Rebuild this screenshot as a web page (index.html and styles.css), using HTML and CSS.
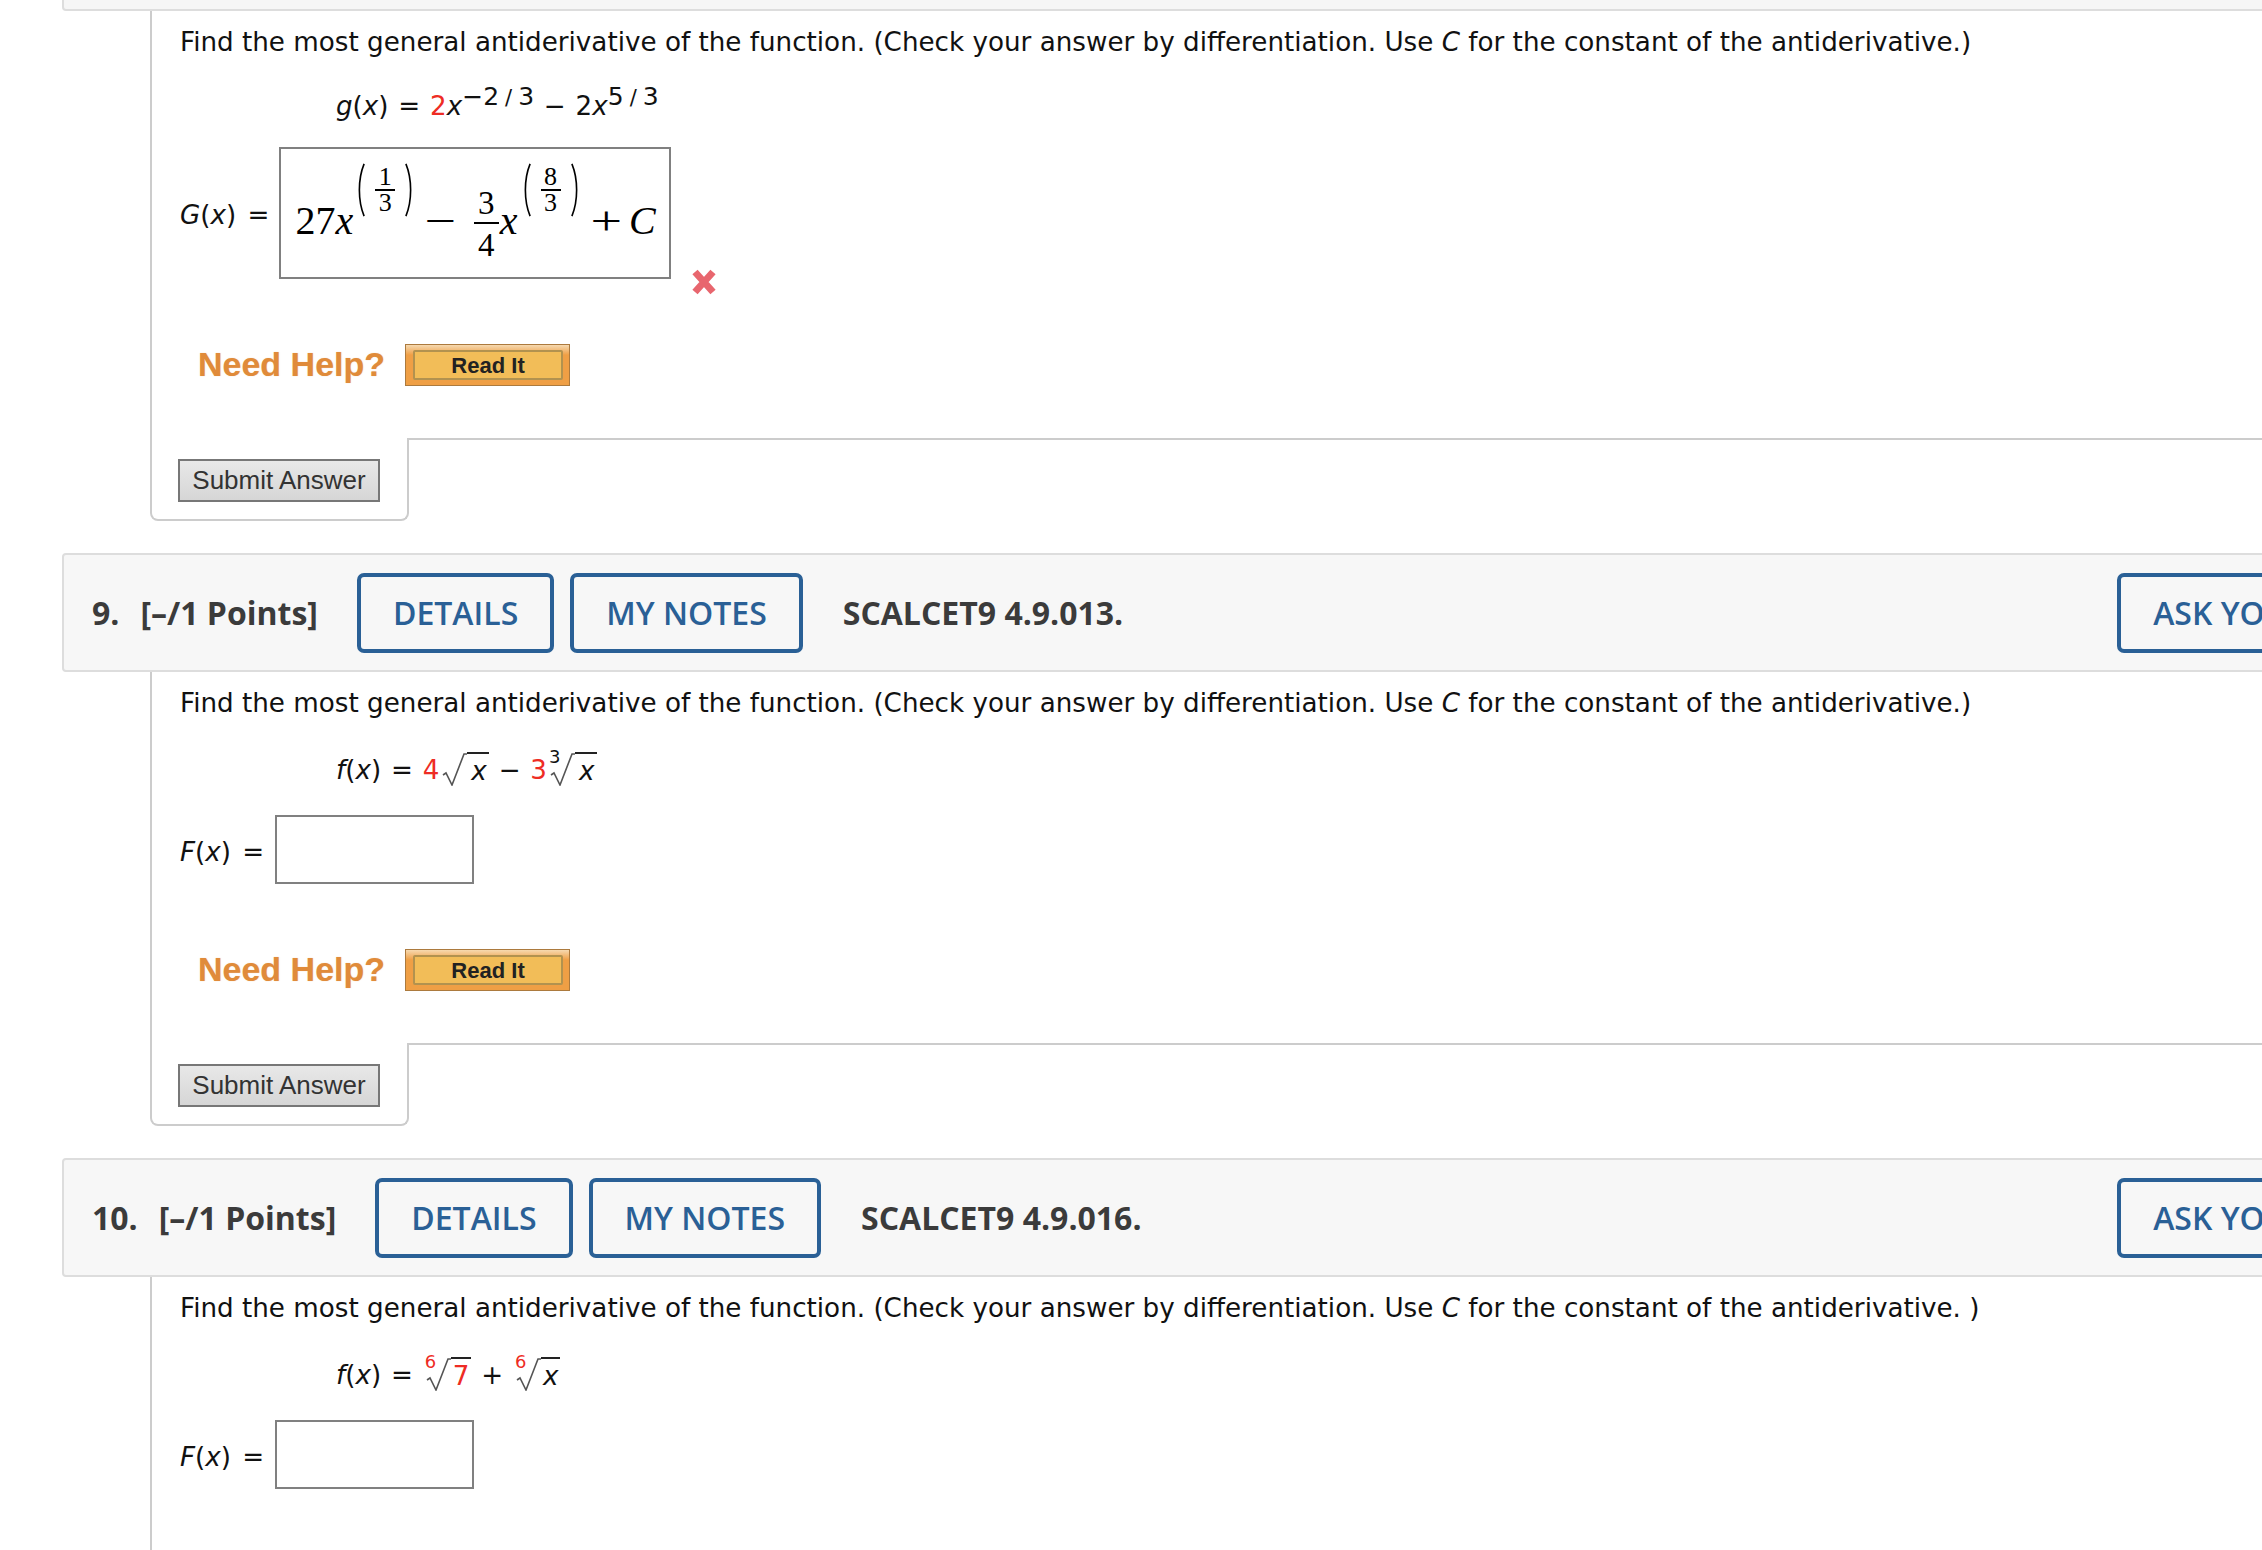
FILE: index.html
```html
<!DOCTYPE html>
<html lang="en">
<head>
<meta charset="utf-8">
<title>Assignment</title>
<link rel="stylesheet" href="styles.css">
</head>
<body>
<main class="page">
  <div class="header-stub"></div>
  <section class="question">
    <div class="q-body">
      <p class="prompt">Find the most general antiderivative of the function. (Check your answer by differentiation. Use <i>C</i> for the constant of the antiderivative.)</p>
      <div class="formula formula-short"><i>g</i>(<i>x</i>) = <span class="red">2</span><i>x</i><sup class="exp">−2<span class="slash">/</span>3</sup> − 2<i>x</i><sup class="exp">5<span class="slash">/</span>3</sup></div>
      <div class="answer-row">
        <span class="label label-g"><i>G</i>(<i>x</i>) =</span>
        <div class="answer-box answer-filled">
          <span class="m m-27">27<i>x</i></span>
          <span class="m-exp">
            <svg class="paren" viewBox="0 0 10 60"><path d="M9 1C2 18 2 42 9 59" /></svg>
            <span class="frac-small"><span>1</span><span class="den">3</span></span>
            <svg class="paren" viewBox="0 0 10 60"><path d="M1 1C8 18 8 42 1 59" /></svg>
          </span>
          <span class="m m-minus"><span class="wide">−</span></span>
          <span class="frac-big"><span class="num">3</span><span class="den">4</span></span>
          <span class="m m-x"><i>x</i></span>
          <span class="m-exp m-exp2">
            <svg class="paren" viewBox="0 0 10 60"><path d="M9 1C2 18 2 42 9 59" /></svg>
            <span class="frac-small"><span>8</span><span class="den">3</span></span>
            <svg class="paren" viewBox="0 0 10 60"><path d="M1 1C8 18 8 42 1 59" /></svg>
          </span>
          <span class="m m-plus"><span class="wide">+</span></span>
          <span class="m m-c"><i>C</i></span>
        </div>
        <svg class="wrong" viewBox="0 0 26 26"><path d="M4 3L22 23M22 3L4 23" /></svg>
      </div>
      <div class="help-row">
        <span class="need-help">Need Help?</span>
        <span class="read-it"><span class="read-it-inner">Read It</span></span>
      </div>
    </div>
    <div class="actions">
      <div class="submit-cell"><button class="submit" type="button">Submit Answer</button></div>
      <div class="actions-rule"></div>
    </div>
  </section>

  <section class="question">
    <header class="q-header">
      <span class="q-num">9.</span>
      <span class="q-points">[–/1 Points]</span>
      <a class="pill pill-first">DETAILS</a>
      <a class="pill">MY NOTES</a>
      <span class="q-ref">SCALCET9 4.9.013.</span>
      <a class="pill pill-ask">ASK YOUR TEACHER</a>
    </header>
    <div class="q-body">
      <p class="prompt">Find the most general antiderivative of the function. (Check your answer by differentiation. Use <i>C</i> for the constant of the antiderivative.)</p>
      <div class="formula"><i>f</i>(<i>x</i>) = <span class="red">4</span><span class="root root-gap"><svg class="radical" viewBox="0 0 25 33"><path d="M1 22L4 20L10 32L22 1H25" /></svg><span class="radicand radicand-wide"><i>x</i></span></span> − <span class="red">3</span><span class="root root-gap"><span class="index">3</span><svg class="radical" viewBox="0 0 25 33"><path d="M1 22L4 20L10 32L22 1H25" /></svg><span class="radicand radicand-wide"><i>x</i></span></span></div>
      <div class="answer-row">
        <span class="label"><i>F</i>(<i>x</i>) =</span>
        <div class="answer-box"></div>
      </div>
      <div class="help-row">
        <span class="need-help">Need Help?</span>
        <span class="read-it"><span class="read-it-inner">Read It</span></span>
      </div>
    </div>
    <div class="actions">
      <div class="submit-cell"><button class="submit" type="button">Submit Answer</button></div>
      <div class="actions-rule"></div>
    </div>
  </section>

  <section class="question">
    <header class="q-header">
      <span class="q-num">10.</span>
      <span class="q-points">[–/1 Points]</span>
      <a class="pill pill-first">DETAILS</a>
      <a class="pill">MY NOTES</a>
      <span class="q-ref">SCALCET9 4.9.016.</span>
      <a class="pill pill-ask">ASK YOUR TEACHER</a>
    </header>
    <div class="q-body q-body-open">
      <p class="prompt">Find the most general antiderivative of the function. (Check your answer by differentiation. Use <i>C</i> for the constant of the antiderivative. )</p>
      <div class="formula"><i>f</i>(<i>x</i>) = <span class="root"><span class="index red">6</span><svg class="radical" viewBox="0 0 25 33"><path d="M1 22L4 20L10 32L22 1H25" /></svg><span class="radicand red">7</span></span> + <span class="root"><span class="index red">6</span><svg class="radical" viewBox="0 0 25 33"><path d="M1 22L4 20L10 32L22 1H25" /></svg><span class="radicand"><i>x</i></span></span></div>
      <div class="answer-row">
        <span class="label"><i>F</i>(<i>x</i>) =</span>
        <div class="answer-box"></div>
      </div>
    </div>
  </section>
</main>
</body>
</html>
```

FILE: styles.css
```css
* { box-sizing: border-box; }
html, body { margin: 0; padding: 0; height: 1550px; overflow: hidden; background: #fff; }
.page { width: 2500px; padding-left: 62px; font-family: "DejaVu Sans", sans-serif; font-size: 26.16px; color: #111; }

.header-stub { height: 11px; background: #f6f6f6; border: 2px solid #ddd; border-top: 0; border-radius: 0 0 4px 4px; }

.question { margin-bottom: 32px; }
.q-header { height: 119px; display: flex; align-items: center; padding: 0 5px 0 28px; background: #f7f7f7; border: 2px solid #ddd; border-radius: 4px; font-family: "Open Sans", sans-serif; color: #3b3b3b; }
.q-num { font-size: 32px; font-weight: 700; margin-right: 21px; }
.q-points { font-size: 32px; font-weight: 700; white-space: nowrap; }
.pill { height: 80px; display: flex; align-items: center; padding: 0 32px; margin-left: 16px; border: 4px solid #2a6096; border-radius: 7px; color: #2a6096; font-size: 32px; font-weight: 600; white-space: nowrap; }
.pill-first { margin-left: 39px; }
.q-ref { margin-left: 40px; font-size: 32px; font-weight: 700; white-space: nowrap; }
.pill-ask { margin-left: auto; }

.q-body { margin-left: 88px; padding: 14px 0 52px 28px; border-left: 2px solid #ccc; }
.q-body-open { padding-bottom: 80px; }
.prompt { margin: 0; line-height: 34px; white-space: nowrap; font-size: 26.19px; }
.red { color: #ee2c24; }

.formula { height: 50px; margin: 25px 0 0 156px; display: flex; align-items: center; white-space: pre; word-spacing: 1.5px; }
.formula-short { height: 43px; }
.exp { font-size: 25px; line-height: 0; vertical-align: baseline; position: relative; top: -8px; }
.slash { margin: 0 6px; font-size: 21px; }
.root { display: inline-flex; align-items: flex-start; position: relative; height: 36px; margin-left: 3px; }
.root-gap { margin-left: 3px; }
.radical { width: 25px; height: 33px; margin-top: 1px; fill: none; stroke: #555; stroke-width: 1.6; }
.radicand { border-top: 2px solid #222; line-height: 34px; padding: 0 2px; height: 36px; }
.radicand-wide { padding-left: 4px; }
.index { position: absolute; left: -1px; top: -4px; font-size: 18px; line-height: 18px; }

.answer-row { margin-top: 20px; display: flex; align-items: center; }
.label { margin-right: 11px; margin-top: 5px; white-space: pre; word-spacing: 3px; }
.label-g { margin-right: 10px; margin-top: 3px; }
.answer-box { width: 199px; height: 69px; border: 2px solid #808080; background: #fff; }
.answer-filled { width: 392px; height: 132px; padding-left: 14px; display: flex; align-items: flex-start; font-family: "Liberation Serif", serif; font-size: 40px; color: #000; }
.m { line-height: 40px; margin-top: 52px; white-space: nowrap; }
.wide { display: inline-block; transform: scaleX(1.4); }
.m-exp { display: flex; align-items: center; margin: 11px 0 0 3px; width: 58px; height: 60px; justify-content: space-between; }
.paren { width: 9px; height: 60px; fill: none; stroke: #000; stroke-width: 1.8; }
.frac-small { display: flex; flex-direction: column; align-items: center; font-size: 26px; line-height: 24px; width: 20px; }
.frac-small .den { border-top: 2px solid #000; width: 100%; text-align: center; }
.m-minus { margin-left: 15px; }
.frac-big { display: flex; flex-direction: column; align-items: center; font-size: 33px; line-height: 30px; margin: 39px 0 0 22px; width: 25px; }
.frac-big .num { padding-bottom: 4px; }
.frac-big .den { border-top: 2px solid #000; width: 100%; text-align: center; padding-top: 6px; }
.m-x { margin-left: 1px; }
.m-exp2 { margin-left: 4px; }
.m-plus { margin-left: 15px; }
.m-c { margin-left: 12px; }
.wrong { width: 26px; height: 26px; margin: 0 0 -16px 20px; align-self: flex-end; fill: none; stroke: #e8666e; stroke-width: 7; }

.help-row { margin: 65px 0 0 18px; display: flex; align-items: center; gap: 20px; }
.need-help { font-family: "Liberation Sans", sans-serif; font-weight: 700; font-size: 34px; color: #e08b3a; line-height: 40px; padding-bottom: 2px; text-shadow: 0 0 1px rgba(224, 139, 58, .5); }
.read-it { width: 165px; height: 42px; padding: 5px 6px 5px 7px; background: linear-gradient(#f6d9b0 0, #ef9f45 25%); border: 1px solid #ac7a3e; }
.read-it-inner { display: flex; height: 100%; align-items: center; justify-content: center; padding-top: 1px; background: #f2bd58; border: 2px solid #b2924f; border-radius: 2px; font-family: "Liberation Sans", sans-serif; font-weight: 700; font-size: 22px; color: #222; }

.actions { display: flex; margin-left: 88px; align-items: flex-start; }
.submit-cell { width: 259px; height: 83px; padding: 21px 0 0 26px; border: 2px solid #ccc; border-top: 0; border-radius: 0 0 8px 8px; }
.submit { width: 202px; height: 43px; padding: 0; border: 2px solid #777; background: linear-gradient(#e8e8e8, #d6d6d6); font-family: "Liberation Sans", sans-serif; font-size: 26px; color: #333; }
.actions-rule { flex: 1; border-top: 2px solid #ccc; }
```
